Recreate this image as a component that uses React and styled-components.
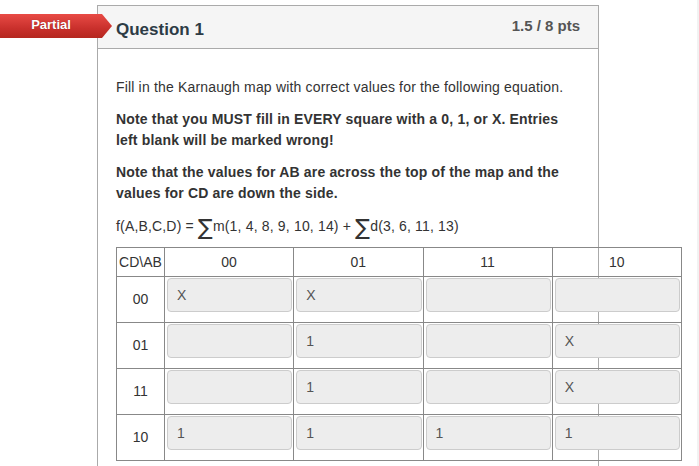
import React from "react";
import styled, { createGlobalStyle } from "styled-components";

const GlobalStyle = createGlobalStyle`
  html, body {
    margin: 0;
    padding: 0;
    background: #fff;
    font-family: "Liberation Sans", Arial, sans-serif;
  }
`;

const Page = styled.div`
  display: flex;
  width: 699px;
  height: 466px;
  overflow: hidden;
`;

const Main = styled.div`
  position: relative;
  flex: 1;
  padding: 5px 0 0 97px;
`;

const SideStrip = styled.div`
  width: 2px;
  background: #f2f2f2;
`;

const Badge = styled.div`
  position: absolute;
  left: 0;
  top: 14px;
  width: 112px;
  height: 24px;
  padding-right: 10px;
  box-sizing: border-box;
  clip-path: polygon(0 0, 102px 0, 112px 50%, 102px 100%, 0 100%);
  background: linear-gradient(#e84b45, #c9302c 60%, #b5271f);
  color: #fff;
  font-weight: bold;
  font-size: 13px;
  line-height: 22px;
  text-align: center;
  text-shadow: 0 0 1px rgba(0, 0, 0, 0.35);
  z-index: 2;
`;

const Card = styled.div`
  width: 502px;
  box-sizing: border-box;
  border: 1px solid #aaa;
  border-bottom: none;
  min-height: 470px;
`;

const CardHeader = styled.div`
  display: flex;
  justify-content: space-between;
  align-items: center;
  height: 43px;
  padding: 0 18px;
  box-sizing: border-box;
  background: #f5f5f5;
  border-bottom: 1px solid #aaa;
`;

const Title = styled.div`
  font-size: 17px;
  font-weight: bold;
  color: #2d3b45;
  margin-top: 5px;
`;

const Points = styled.div`
  font-size: 15px;
  font-weight: bold;
  color: #555;
  margin-top: -3px;
`;

const CardBody = styled.div`
  padding: 28px 18px 0;
  font-size: 14px;
  line-height: 21px;
  letter-spacing: 0.17px;
  color: #333;
`;

const Para = styled.p`
  margin: 0 0 11px;
  font-weight: ${(p) => (p.$bold ? "bold" : "normal")};
`;

const Formula = styled.p`
  margin: 0 0 10px;
  height: 22px;
  line-height: 23px;
`;

const Sum = styled.span`
  font-family: "DejaVu Sans", sans-serif;
  font-size: 22px;
  line-height: 0;
  position: relative;
  top: 4px;
`;

const Map = styled.table`
  border-collapse: collapse;
  width: 566px;
  table-layout: fixed;
  border: 1px solid #333;
  font-size: 14px;
  letter-spacing: 0;
  color: #333;
`;

const HeadCell = styled.th`
  font-weight: normal;
  height: 28px;
  padding: 0;
  border: 1px solid #888;
  text-align: center;
  vertical-align: middle;
  width: ${(p) => (p.$corner ? "47px" : "auto")};
`;

const RowLabel = styled.td`
  height: 44px;
  padding: 0;
  border: 1px solid #888;
  text-align: center;
  vertical-align: middle;
`;

const Cell = styled.td`
  height: 44px;
  padding: 1px 1px 0 2px;
  border: 1px solid #888;
  vertical-align: top;
`;

const Entry = styled.div`
  height: 34px;
  box-sizing: border-box;
  border: 1px solid #ccc;
  border-radius: 4px;
  background: #ededed;
  padding-left: 9px;
  line-height: 32px;
  font-size: 14px;
  color: #555;
`;

const cols = ["00", "01", "11", "10"];
const rows = [
  { label: "00", values: ["X", "X", "", ""] },
  { label: "01", values: ["", "1", "", "X"] },
  { label: "11", values: ["", "1", "", "X"] },
  { label: "10", values: ["1", "1", "1", "1"] },
];

export default function App() {
  return (
    <Page>
      <GlobalStyle />
      <Main>
        <Badge>Partial</Badge>
        <Card>
          <CardHeader>
            <Title>Question 1</Title>
            <Points>1.5 / 8 pts</Points>
          </CardHeader>
          <CardBody>
            <Para>
              Fill in the Karnaugh map with correct values for the following
              equation.
            </Para>
            <Para $bold>
              Note that you MUST fill in EVERY square with a 0, 1, or X.
              Entries left blank will be marked wrong!
            </Para>
            <Para $bold>
              Note that the values for AB are across the top of the map and
              the values for CD are down the side.
            </Para>
            <Formula>
              f(A,B,C,D) = <Sum>∑</Sum>m(1, 4, 8, 9, 10, 14) + <Sum>∑</Sum>
              d(3, 6, 11, 13)
            </Formula>
            <Map>
              <thead>
                <tr>
                  <HeadCell $corner>CD\AB</HeadCell>
                  {cols.map((c) => (
                    <HeadCell key={c}>{c}</HeadCell>
                  ))}
                </tr>
              </thead>
              <tbody>
                {rows.map((r) => (
                  <tr key={r.label}>
                    <RowLabel>{r.label}</RowLabel>
                    {r.values.map((v, i) => (
                      <Cell key={i}>
                        <Entry>{v}</Entry>
                      </Cell>
                    ))}
                  </tr>
                ))}
              </tbody>
            </Map>
          </CardBody>
        </Card>
      </Main>
      <SideStrip />
    </Page>
  );
}
